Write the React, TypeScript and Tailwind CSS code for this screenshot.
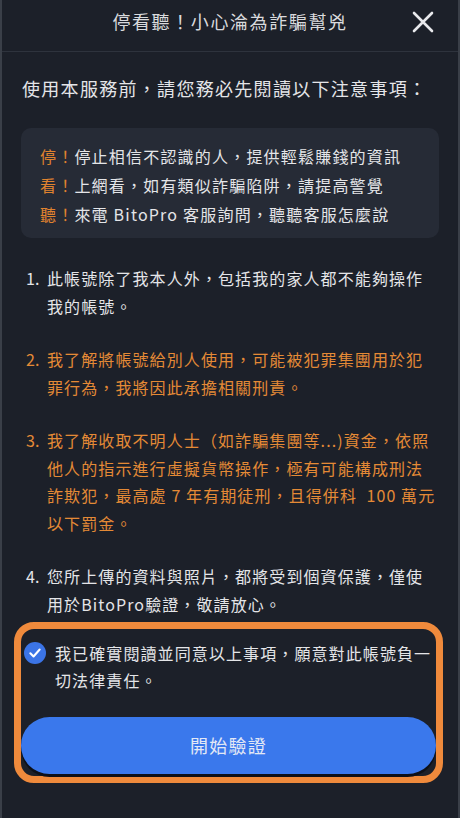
import React from 'react';

const FONT = { fontFamily: '"Noto Sans CJK TC", "Noto Sans", sans-serif' };

// Lines are split where the original wraps them.
const items = [
  { n: '1.', lines: ['此帳號除了我本人外，包括我的家人都不能夠操作', '我的帳號。'], warn: false },
  { n: '2.', lines: ['我了解將帳號給別人使用，可能被犯罪集團用於犯', '罪行為，我將因此承擔相關刑責。'], warn: true },
  {
    n: '3.',
    lines: [
      '我了解收取不明人士（如詐騙集團等...)資金，依照',
      '他人的指示進行虛擬貨幣操作，極有可能構成刑法',
      '詐欺犯，最高處 7 年有期徒刑，且得併科  100 萬元',
      '以下罰金。',
    ],
    warn: true,
  },
  { n: '4.', lines: ['您所上傳的資料與照片，都將受到個資保護，僅使', '用於BitoPro驗證，敬請放心。'], warn: false },
];

const tips = [
  { k: '停', text: '停止相信不認識的人，提供輕鬆賺錢的資訊' },
  { k: '看', text: '上網看，如有類似詐騙陷阱，請提高警覺' },
  { k: '聽', text: '來電 BitoPro 客服詢問，聽聽客服怎麼說' },
];

export default function App() {
  return (
    <div style={FONT} className="w-[460px] h-[818px] bg-[#1c2029] border-x-2 border-[#3a3f48] flex flex-col overflow-hidden text-[#e4e5e8]">
      {/* Header */}
      <header className="h-[52px] shrink-0 border-b border-[#2e333d] relative flex items-center justify-center">
        <h1 className="-mt-[8px] text-[18px] text-[#d9dadd] tracking-[1.6px]">停看聽！小心淪為詐騙幫兇</h1>
        <button className="absolute right-[20px] top-[7px] w-[30px] h-[30px] flex items-center justify-center">
          <svg width="24" height="24" viewBox="0 0 24 24" fill="none" stroke="#e8e9ec" strokeWidth="2.6" strokeLinecap="round">
            <path d="M3 3 L21 21 M21 3 L3 21" />
          </svg>
        </button>
      </header>

      <main className="flex-1 flex flex-col px-[18px]">
        <p className="mt-[22px] text-[18px] leading-[28px] tracking-[1.3px] pl-[2px]">使用本服務前，請您務必先閱讀以下注意事項：</p>

        {/* Tips box */}
        <div className="mt-[26px] ml-[1px] mr-[1px] rounded-[10px] bg-[#262b36] pl-[19px] pr-2 pt-[14px] pb-[9px]">
          {tips.map((t) => (
            <div key={t.k} className="text-[16px] leading-[29px] tracking-[1.2px] whitespace-nowrap">
              <span className="text-[#e0832f]">{t.k}！</span>
              <span>{t.text}</span>
            </div>
          ))}
        </div>

        {/* Notices */}
        <ol className="mt-[27px] flex flex-col gap-[26px] pl-[6px]">
          {items.map((it) => (
            <li key={it.n} className={`flex text-[16px] leading-[27.5px] tracking-[1.1px] ${it.warn ? 'text-[#e48a36]' : 'text-[#e4e5e8]'}`}>
              <span className="w-[21px] shrink-0 tracking-normal">{it.n}</span>
              <span className="flex flex-col whitespace-pre">
                {it.lines.map((l) => (
                  <span key={l}>{l}</span>
                ))}
              </span>
            </li>
          ))}
        </ol>

        {/* Agreement */}
        <div className="mt-[4px] -ml-[6px] -mr-[3px] border-[7px] border-[#ef8a3c] rounded-[20px] pt-[11px] pb-[2px]">
          <label className="flex items-start gap-[9px] pl-[3px]">
            <span className="mt-[2px] w-[22px] h-[22px] shrink-0 rounded-full bg-[#3b74e6] flex items-center justify-center">
              <svg width="14" height="14" viewBox="0 0 24 24" fill="none" stroke="#fff" strokeWidth="3.5" strokeLinecap="round" strokeLinejoin="round">
                <path d="M4 12.5 L9.5 18 L20 6" />
              </svg>
            </span>
            <span className="flex flex-col text-[16px] leading-[27px] tracking-[1.1px]">
              <span className="whitespace-nowrap">我已確實閱讀並同意以上事項，願意對此帳號負一</span>
              <span>切法律責任。</span>
            </span>
          </label>
          <button className="mt-[23px] w-full h-[57px] rounded-full bg-[#3a78ec] shadow-[0_3px_0_#0d1018] text-[18px] text-[#e3e8f5] tracking-[1.2px]">
            開始驗證
          </button>
        </div>
      </main>
    </div>
  );
}
